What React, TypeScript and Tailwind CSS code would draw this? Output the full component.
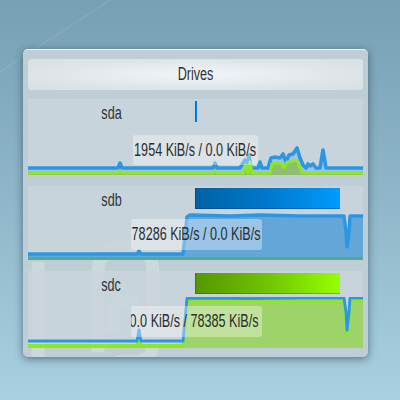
import React from "react";

type Pt = [number, number];

const toLine = (pts: Pt[]) => pts.map((p, i) => `${i ? "L" : "M"}${p[0]} ${p[1]}`).join(" ");
const toArea = (pts: Pt[], bottom: number) =>
  `${toLine(pts)} L${pts[pts.length - 1][0]} ${bottom} L${pts[0][0]} ${bottom} Z`;

const sdaBlue: Pt[] = [
  [28, 168], [118, 168], [120, 163], [122, 168], [213, 168], [215, 163], [217, 168], [240, 168],
  [245, 160], [247, 166], [249, 155], [251, 168], [258, 168], [260, 162], [262, 168], [268, 168],
  [271, 158], [275, 157], [280, 158], [283, 154], [286, 162], [289, 155], [293, 154], [297, 148],
  [300, 158], [303, 165], [306, 168], [308, 164], [310, 166], [313, 164], [316, 168], [320, 168],
  [323, 150], [326, 168], [363, 168],
];
const sdaGreen: Pt[] = [
  [28, 173], [118, 173], [120, 171], [122, 173], [213, 173], [215, 171], [217, 173], [243, 173],
  [246, 165], [248, 173], [250, 162], [252, 173], [270, 173], [272, 164], [276, 163], [280, 163],
  [284, 168], [287, 162], [291, 162], [295, 160], [298, 162], [302, 173], [363, 173],
];
const sdbBlue: Pt[] = [
  [28, 254], [137, 254], [139, 251], [141, 254], [183, 254], [187, 217], [190, 215], [230, 216],
  [260, 215], [300, 216], [344, 216], [346, 232], [347, 247], [349, 232], [350, 216], [363, 216],
];
const sdbGreen: Pt[] = [[28, 258.5], [363, 258.5]];
const sdcGreen: Pt[] = [
  [28, 345.5], [137, 345.5], [139, 334], [141, 345.5], [183, 345.5], [187, 302], [190, 301],
  [344, 301], [346, 316], [347, 334], [349, 316], [350, 301], [363, 301],
];
const sdcBlue: Pt[] = [
  [28, 341], [137, 341], [139, 330], [141, 341], [183, 341], [187, 298.5], [190, 298], [250, 298.5],
  [300, 298], [344, 298], [346, 312], [347, 330], [349, 312], [350, 298], [363, 298],
];

function Chart({
  top,
  h,
  blue,
  green,
  blueFill,
  greenFill,
  greenOnTop,
  blueW,
}: {
  top: number;
  h: number;
  blue: Pt[];
  green: Pt[];
  blueFill: string;
  greenFill: string;
  greenOnTop: boolean;
  blueW: number;
}) {
  const bottom = top + h;
  const b = (
    <g key="b">
      <path d={toArea(blue, bottom)} fill={blueFill} />
      <path d={toLine(blue)} fill="none" stroke="#2a97e4" strokeWidth={blueW} strokeLinejoin="round" />
    </g>
  );
  const g = (
    <g key="g">
      <path d={toArea(green, bottom)} fill={greenFill} />
      <path d={toLine(green)} fill="none" stroke="#8fe625" strokeWidth={3} strokeLinejoin="round" />
    </g>
  );
  return (
    <svg
      width={335}
      height={h}
      viewBox={`28 ${top} 335 ${h}`}
      preserveAspectRatio="none"
      className="block"
    >
      {greenOnTop ? [b, g] : [g, b]}
    </svg>
  );
}

function Row({
  name,
  barW,
  barClass,
  rowH,
  chartH,
  chartTop,
  blue,
  green,
  blueFill,
  greenFill,
  greenOnTop,
  blueW,
  text,
  box,
  shift,
}: {
  name: string;
  barW: number;
  barClass: string;
  rowH: string;
  chartH: number;
  chartTop: number;
  blue: Pt[];
  green: Pt[];
  blueFill: string;
  greenFill: string;
  greenOnTop: boolean;
  blueW: number;
  text: string;
  box: string;
  shift: string;
}) {
  return (
    <div className={`relative flex flex-col bg-[#cad6dc]/80 ${rowH}`}>
      <div className="flex h-[26px] items-start">
        <div className="mt-[4px] w-[167px] text-center leading-[21px]">
          <span className="inline-block scale-x-[0.7] text-[18px] text-[#2f3133]">{name}</span>
        </div>
        <div className="mt-[2px] h-[21px] w-[145px]">
          <div className={`h-full ${barClass}`} style={{ width: barW }} />
        </div>
      </div>
      <div className="relative">
        <Chart
          top={chartTop}
          h={chartH}
          blue={blue}
          green={green}
          blueFill={blueFill}
          greenFill={greenFill}
          greenOnTop={greenOnTop}
          blueW={blueW}
        />
        <div
          className={`absolute flex items-center justify-center overflow-hidden rounded-[3px] bg-white/35 ${box}`}
        >
          <span
            className={`inline-block shrink-0 whitespace-nowrap scale-x-[0.7] text-[18px] leading-[21px] text-[#2b2d2f] ${shift}`}
          >
            {text}
          </span>
        </div>
      </div>
    </div>
  );
}

export default function App() {
  return (
    <div
      className="relative h-[400px] w-[400px] overflow-hidden bg-gradient-to-b from-[#78a0b3] via-[#8fb7c9] to-[#a9d0e0] pl-[23px] pt-[49px]"
      style={{ fontFamily: '"Liberation Sans", Arial, sans-serif' }}
    >
      <svg
        width={120}
        height={80}
        viewBox="0 0 120 80"
        className="pointer-events-none absolute left-0 top-0"
      >
        <path d="M0 72 L110 0" stroke="rgba(255,255,255,0.12)" strokeWidth={1} fill="none" />
      </svg>
      <div className="relative flex h-[308px] w-[345px] flex-col gap-[9px] overflow-hidden rounded-[5px] border-t border-[#eef3f5] bg-[#bfcdd4] px-[5px] pt-[9px] shadow-[0_2px_8px_rgba(20,45,60,0.55)]">
        <svg
          width={140}
          height={170}
          viewBox="0 0 140 170"
          className="pointer-events-none absolute left-[5px] top-[152px]"
        >
          <g fill="none" stroke="rgba(255,255,255,0.22)" strokeWidth={13}>
            <path d="M10 60 L10 150 Q10 165 30 165" />
            <path d="M70 150 L70 70 Q70 45 95 45 L100 45 Q125 45 125 70 L125 140 Q125 160 105 160 L88 160" />
            <path d="M85 130 L85 110 Q85 100 98 100 L110 100" />
          </g>
        </svg>
        <div className="relative flex h-[31px] items-center justify-center rounded-[3px] bg-[radial-gradient(ellipse_at_center,#f2f5f6_0%,#dfe6ea_60%,#d6dfe3_100%)]">
          <span className="inline-block scale-x-[0.7] text-[18px] text-[#2f3133]">Drives</span>
        </div>
        <div className="relative flex flex-col gap-[11px]">
          <Row
            name="sda"
            barW={2}
            barClass="bg-gradient-to-r from-[#0066ad] to-[#0a8fee]"
            rowH="h-[76px]"
            chartH={50}
            chartTop={125}
            blue={sdaBlue}
            green={sdaGreen}
            blueFill="rgba(60,150,220,0.28)"
            greenFill="rgba(135,185,40,0.6)"
            greenOnTop={true}
            blueW={3.6}
            text="1954 KiB/s / 0.0 KiB/s"
            box="left-[105px] top-[10px] h-[30px] w-[125px]"
            shift=""
          />
          <Row
            name="sdb"
            barW={145}
            barClass="bg-gradient-to-r from-[#0061a6] via-[#0079cc] to-[#009bff] shadow-[inset_1px_-1px_0_rgba(0,40,80,0.35)]"
            rowH="h-[74px]"
            chartH={48}
            chartTop={212}
            blue={sdbBlue}
            green={sdbGreen}
            blueFill="rgba(35,135,215,0.6)"
            greenFill="rgba(0,0,0,0)"
            greenOnTop={false}
            blueW={3.4}
            text="78286 KiB/s / 0.0 KiB/s"
            box="left-[103px] top-[7px] h-[31px] w-[131px]"
            shift=""
          />
          <Row
            name="sdc"
            barW={145}
            barClass="bg-gradient-to-r from-[#559600] via-[#70c400] to-[#95ff00] shadow-[inset_1px_-1px_0_rgba(30,60,0,0.3)]"
            rowH="h-[77px]"
            chartH={51}
            chartTop={297}
            blue={sdcBlue}
            green={sdcGreen}
            blueFill="rgba(0,0,0,0)"
            greenFill="rgba(135,210,45,0.65)"
            greenOnTop={false}
            blueW={2.8}
            text="0.0 KiB/s / 78385 KiB/s"
            box="left-[103px] top-[9px] h-[31px] w-[131px]"
            shift="translate-x-[-2px]"
          />
        </div>
      </div>
    </div>
  );
}
